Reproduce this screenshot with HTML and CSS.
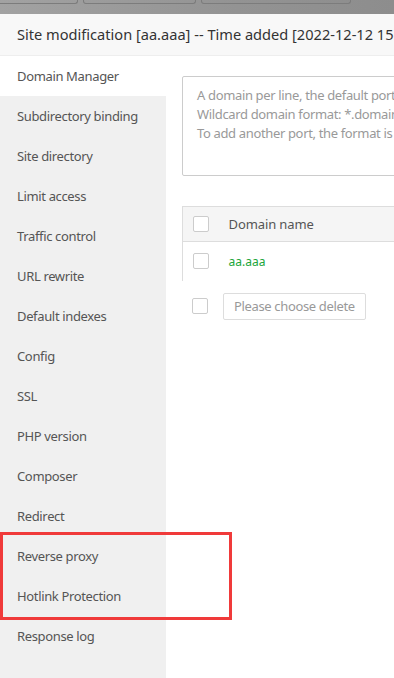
FILE: index.html
```html
<!DOCTYPE html>
<html lang="en">
  <head>
    <meta charset="UTF-8" />
    <meta name="viewport" content="width=device-width, initial-scale=1.0" />
    <title>Site modification</title>
    <link rel="stylesheet" href="styles.css">
  </head>
  <body>
    <div class="topbar">
      <span class="tb-btn tb-1"></span>
      <span class="tb-btn tb-2"></span>
      <span class="tb-btn tb-3"></span>
    </div>
    <div class="modal">
      <div class="modal-title">Site modification [aa.aaa] -- Time added [2022-12-12 15:32:10]</div>
      <div class="modal-body">
        <ul class="side">
          <li class="active">Domain Manager</li>
          <li>Subdirectory binding</li>
          <li>Site directory</li>
          <li>Limit access</li>
          <li>Traffic control</li>
          <li>URL rewrite</li>
          <li>Default indexes</li>
          <li>Config</li>
          <li>SSL</li>
          <li>PHP version</li>
          <li>Composer</li>
          <li>Redirect</li>
          <li>Reverse proxy</li>
          <li>Hotlink Protection</li>
          <li>Response log</li>
        </ul>
        <div class="content">
          <textarea class="domains" placeholder="A domain per line, the default port is 80
Wildcard domain format: *.domain.com
To add another port, the format is www.domain.com:88"></textarea>
          <table class="list">
            <thead>
              <tr>
                <th class="col-check"><span class="check"></span></th>
                <th>Domain name</th>
              </tr>
            </thead>
            <tbody>
              <tr>
                <td class="col-check"><span class="check"></span></td>
                <td><a class="domain-link">aa.aaa</a></td>
              </tr>
            </tbody>
          </table>
          <div class="batch">
            <span class="check"></span>
            <button class="batch-btn" type="button">Please choose delete</button>
          </div>
        </div>
      </div>
    </div>
    <div class="highlight"></div>
  </body>
</html>
```

FILE: styles.css
```css
* {
  margin: 0;
  padding: 0;
  box-sizing: border-box;
}
body {
  width: 394px;
  height: 678px;
  overflow: hidden;
  position: relative;
  font-family: "Noto Sans", "Liberation Sans", sans-serif;
  font-size: 13px;
  letter-spacing: -0.35px;
  color: #555;
  background: #fff;
}
.topbar {
  height: 14px;
  background: linear-gradient(90deg, #a2a2a2, #939393 60%, #8d8d8d);
  position: relative;
}
.tb-btn {
  position: absolute;
  top: 0;
  height: 4px;
  border: 1px solid #7c7c7c;
  border-top: 0;
  border-radius: 0 0 3px 3px;
}
.tb-1 { left: -10px; width: 88px; }
.tb-2 { left: 83px; width: 113px; }
.tb-3 { left: 201px; width: 150px; }
.modal {
  width: 820px;
}
.modal-title {
  height: 42px;
  line-height: 41px;
  padding-left: 17px;
  background: #f8f8f8;
  border-bottom: 1px solid #eee;
  font-size: 14.6px;
  letter-spacing: 0;
  color: #333;
  white-space: nowrap;
  overflow: hidden;
}
.modal-body {
  display: flex;
}
.side {
  list-style: none;
  width: 166px;
  min-height: 622px;
  background: #f0f0f0;
  flex-shrink: 0;
}
.side li {
  height: 40px;
  line-height: 40px;
  padding-left: 17px;
  white-space: nowrap;
}
.side li.active {
  background: #fff;
}
.content {
  flex: 1;
  padding: 20px 16px;
}
.domains {
  display: block;
  width: 100%;
  height: 100px;
  border: 1px solid #ccc;
  border-radius: 2px;
  padding: 9px 14px;
  font-family: inherit;
  font-size: 13px;
  letter-spacing: -0.35px;
  line-height: 19px;
  resize: none;
  outline: 0;
}
.domains::placeholder {
  color: #999;
}
.list {
  width: 100%;
  margin-top: 30px;
  border-collapse: collapse;
  border: 1px solid #ddd;
  border-bottom: 0;
}
.list th {
  height: 35px;
  background: #f5f5f5;
  font-weight: normal;
  text-align: left;
  color: #555;
  letter-spacing: -0.1px;
  border-bottom: 1px solid #ddd;
}
.list td {
  height: 39px;
}
.list .col-check {
  width: 46px;
  padding-left: 10px;
}
.check {
  display: block;
  width: 16px;
  height: 16px;
  border: 1px solid #ccc;
  border-radius: 2px;
  background: #fff;
}
.domain-link {
  color: #20a53a;
  font-size: 12px;
  letter-spacing: 0;
}
.batch {
  display: flex;
  align-items: center;
  gap: 15px;
  margin-top: 12px;
  padding-left: 10px;
}
.batch-btn {
  height: 27px;
  padding: 0 10px;
  border: 1px solid #ddd;
  border-radius: 2px;
  background: #fff;
  color: #999;
  font-family: inherit;
  font-size: 13px;
  letter-spacing: -0.35px;
}
.highlight {
  position: absolute;
  left: 0;
  top: 532px;
  width: 232px;
  height: 88px;
  border: 3px solid #f03a3a;
}
```
